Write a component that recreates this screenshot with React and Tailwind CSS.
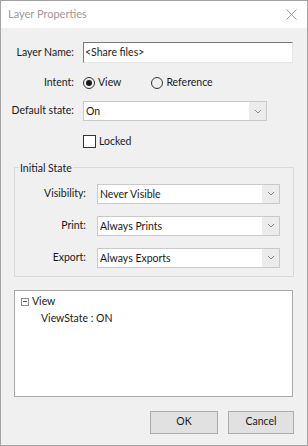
import React from 'react';

const Chevron = () => (
  <svg width="8" height="5" viewBox="0 0 8 5" className="text-[#8a8a8a]">
    <path d="M1 1 L4 4 L7 1" fill="none" stroke="currentColor" strokeWidth="1" />
  </svg>
);

const Select = ({ value, width }) => (
  <div className={`flex h-[20px] ${width} border border-[#c9c9c9] bg-white`}>
    <div className="flex-1 pl-[2px] leading-[18px] text-[#1a1a1a]">{value}</div>
    <div className="flex w-[17px] items-center justify-center bg-[#ececec]">
      <Chevron />
    </div>
  </div>
);

const Radio = ({ checked, label }) => (
  <div className="flex items-center">
    <span className="flex h-[12px] w-[12px] items-center justify-center rounded-full border border-[#333]">
      {checked && <span className="h-[6px] w-[6px] rounded-full bg-[#1a1a1a]" />}
    </span>
    <span className="ml-[3px]">{label}</span>
  </div>
);

const App = () => {
  return (
    <div
      className="flex h-[446px] w-[308px] flex-col border border-[#a3a3a3] bg-[#f0f0f0] text-[10.5px] text-[#1a1a1a]"
      style={{ fontFamily: 'Lato, "Noto Sans", sans-serif' }}
    >
      <div className="flex h-[27px] items-center justify-between bg-white pl-[7px] pr-[10px]">
        <span className="text-[11px] text-[#9a9a9a]">Layer Properties</span>
        <svg width="11" height="11" viewBox="0 0 11 11">
          <path d="M0.5 0.5 L10.5 10.5 M10.5 0.5 L0.5 10.5" stroke="#a0a0a0" strokeWidth="1" />
        </svg>
      </div>

      <div className="mt-[14px] flex items-center">
        <div className="w-[73px] text-right">Layer Name:</div>
        <div className="ml-[9px] h-[21px] w-[210px] border border-t-[#7a7a7a] border-l-[#7a7a7a] border-r-[#e6e6e6] border-b-[#e6e6e6] bg-white pl-[1px] leading-[18px]">
          &lt;Share files&gt;
        </div>
      </div>

      <div className="mt-[12px] flex h-[16px] items-center">
        <div className="w-[73px] text-right">Intent:</div>
        <div className="ml-[9px] flex items-center">
          <Radio checked label="View" />
          <div className="ml-[30px]">
            <Radio label="Reference" />
          </div>
        </div>
      </div>

      <div className="mt-[10px] flex items-center">
        <div className="w-[73px] text-right">Default state:</div>
        <div className="ml-[9px]">
          <Select value="On" width="w-[184px]" />
        </div>
      </div>

      <div className="mt-[13px] flex items-center pl-[82px]">
        <span className="h-[13px] w-[13px] border border-[#333] bg-white" />
        <span className="ml-[3px]">Locked</span>
      </div>

      <fieldset className="mx-[13px] mt-[10px] border border-[#d9d9d9] pb-[8px]">
        <legend className="ml-[4px] px-[1px] leading-[16px]">Initial State</legend>
        <div className="mt-[8px] flex flex-col gap-[12px]">
          {[
            ['Visibility:', 'Never Visible'],
            ['Print:', 'Always Prints'],
            ['Export:', 'Always Exports'],
          ].map(([label, value]) => (
            <div key={label} className="flex items-center">
              <div className="w-[71px] text-right">{label}</div>
              <div className="ml-[11px]">
                <Select value={value} width="w-[183px]" />
              </div>
            </div>
          ))}
        </div>
      </fieldset>

      <div className="ml-[13px] mt-[13px] h-[107px] w-[279px] border border-[#a9a9a9] bg-white pl-[6px] pt-[3px]">
        <div className="flex items-center">
          <span className="flex h-[8px] w-[8px] items-center justify-center border border-[#8a8a8a]">
            <span className="h-px w-[4px] bg-[#555]" />
          </span>
          <span className="ml-[3px]">View</span>
        </div>
        <div className="ml-[20px] mt-[1px]">ViewState : ON</div>
      </div>

      <div className="mt-[14px] flex justify-end gap-[10px] pr-[13px]">
        <button className="h-[23px] w-[68px] border border-[#adadad] bg-[#e1e1e1] text-[#1a1a1a]">OK</button>
        <button className="h-[23px] w-[66px] border border-[#adadad] bg-[#e1e1e1] text-[#1a1a1a]">Cancel</button>
      </div>
    </div>
  );
};

export default App;
